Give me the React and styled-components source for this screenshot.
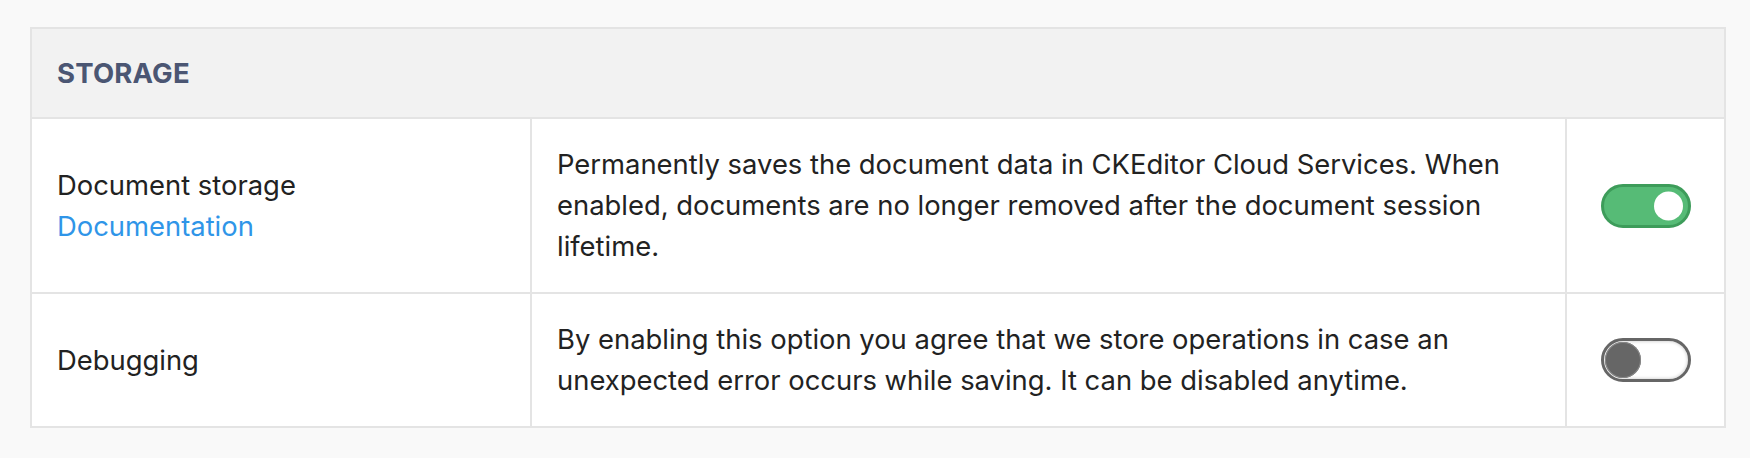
import React from 'react'
import styled, { createGlobalStyle } from 'styled-components'

const GlobalStyle = createGlobalStyle`
	html, body {
		margin: 0;
		padding: 0;
		background: #f9f9f9;
		font-family: Inter, 'Noto Sans', sans-serif;
		color: #222;
	}
`

const rows = [
	{
		name: 'Document storage',
		link: 'Documentation',
		text: 'Permanently saves the document data in CKEditor Cloud Services. When enabled, documents are no longer removed after the document session lifetime.',
		on: true,
	},
	{
		name: 'Debugging',
		text: 'By enabling this option you agree that we store operations in case an unexpected error occurs while saving. It can be disabled anytime.',
		on: false,
	},
]

const App = () => {
	return (
		<>
			<GlobalStyle />
			<Page>
				<Table>
					<Header>Storage</Header>
					{rows.map((row) => (
						<Row key={row.name}>
							<NameCell>
								<div>{row.name}</div>
								{row.link && <Link href='#'>{row.link}</Link>}
							</NameCell>
							<TextCell>{row.text}</TextCell>
							<ToggleCell>
								<Toggle $on={row.on}>
									<Knob $on={row.on} />
								</Toggle>
							</ToggleCell>
						</Row>
					))}
				</Table>
			</Page>
		</>
	)
}

const Page = styled.div`
	padding: 27px 24px 29px 30px;
`

const Table = styled.div`
	border: 2px solid #e4e4e4;
	background: #fff;
	width: 1692px;
`

const Header = styled.div`
	background: #f2f2f2;
	border-bottom: 2px solid #e4e4e4;
	padding: 0 25px;
	height: 88px;
	display: flex;
	align-items: center;
	font-size: 27.5px;
	font-weight: 700;
	text-transform: uppercase;
	color: #4b5673;
	letter-spacing: 0.2px;
`

const Row = styled.div`
	display: grid;
	grid-template-columns: 500px 1035px 1fr;
	border-bottom: 2px solid #e4e4e4;
	font-size: 27.4px;
	line-height: 41px;

	&:last-child {
		border-bottom: none;
	}
`

const Cell = styled.div`
	padding: 25px;
	display: flex;
	flex-direction: column;
	justify-content: center;
`

const NameCell = styled(Cell)`
	border-right: 2px solid #e4e4e4;
`

const TextCell = styled(Cell)`
	border-right: 2px solid #e4e4e4;
	padding-right: 40px;
`

const ToggleCell = styled(Cell)`
	align-items: center;
	padding: 0;
`

const Link = styled.a`
	color: #2f95e8;
	text-decoration: none;
`

const Toggle = styled.div`
	position: relative;
	box-sizing: border-box;
	width: 90px;
	height: 44px;
	border-radius: 22px;
	border: 3px solid ${(p) => (p.$on ? '#3d9c5a' : '#666')};
	background: ${(p) => (p.$on ? '#56bb76' : '#fff')};
	box-shadow: ${(p) => (p.$on ? 'none' : 'inset 0 0 3px 1px rgba(0,0,0,0.15)')};
`

const Knob = styled.div`
	position: absolute;
	top: 50%;
	transform: translateY(-50%);
	border-radius: 50%;
	background: ${(p) => (p.$on ? '#fff' : '#666')};
	width: ${(p) => (p.$on ? '29px' : '36px')};
	height: ${(p) => (p.$on ? '29px' : '36px')};
	left: ${(p) => (p.$on ? '50px' : '1px')};
	box-shadow: ${(p) => (p.$on ? 'none' : 'inset 0 0 0 1px #888')};
`

export default App
